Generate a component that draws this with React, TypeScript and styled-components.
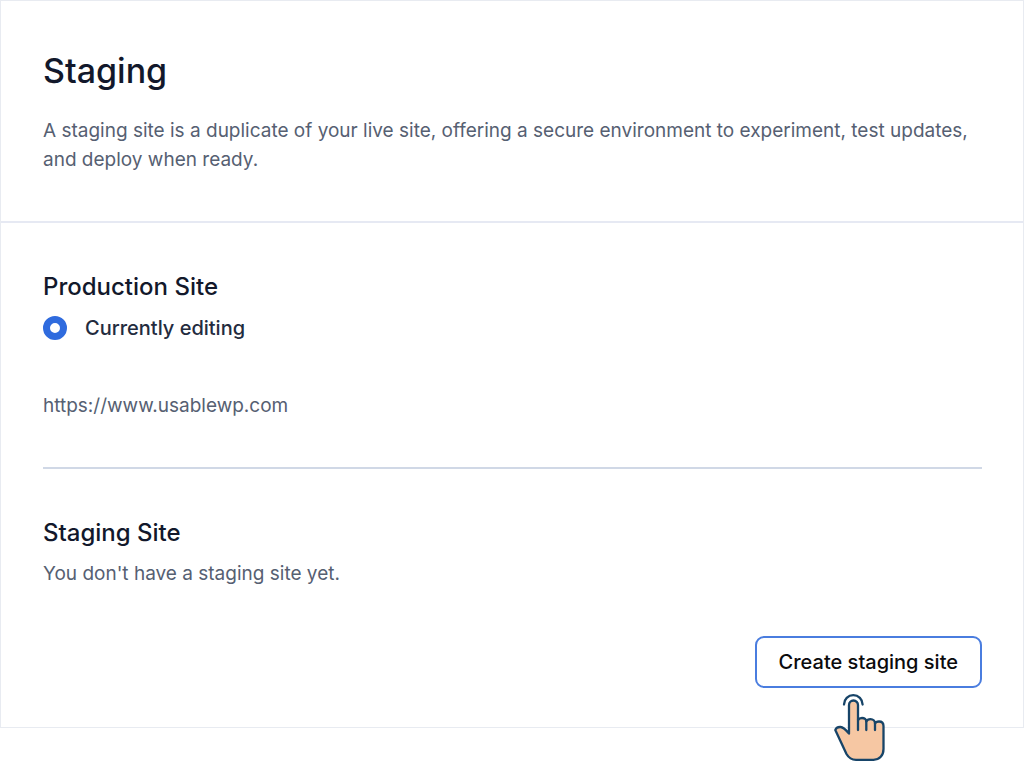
import React from "react";
import styled, { createGlobalStyle } from "styled-components";

const GlobalStyle = createGlobalStyle`
  *, *::before, *::after { box-sizing: border-box; }
  body {
    margin: 0;
    background: #ffffff;
    color: #566072;
    font-family: Inter, "Liberation Sans", sans-serif;
    font-size: 19px;
    line-height: 29px;
  }
`;

const Page = styled.div`
  min-height: 100vh;
`;

const Panel = styled.main`
  border: 1px solid #e8ebf1;
`;

const Header = styled.header`
  padding: 46px 42px 47px;
  border-bottom: 2px solid #e6e9f3;
`;

const Title = styled.h1`
  margin: 0 0 21px;
  color: #12182b;
  font-size: 34px;
  line-height: 48px;
  font-weight: 500;
`;

const Text = styled.p`
  margin: 0;
`;

const Body = styled.div`
  padding: 48px 41px 39px 42px;
`;

const Site = styled.section`
  & + & {
    margin-top: 47px;
    padding-top: 48px;
    border-top: 2px solid #d0d8e6;
  }
`;

const SiteName = styled.h2`
  margin: 0 0 10px;
  color: #12182b;
  font-size: 24px;
  line-height: 32px;
  font-weight: 500;
`;

const Choice = styled.label`
  display: flex;
  align-items: center;
  gap: 18px;
  margin-bottom: 48px;
  color: #232b3e;
  font-size: 20px;
  line-height: 30px;
  font-weight: 500;
`;

const Radio = styled.input`
  appearance: none;
  width: 24px;
  height: 24px;
  margin: 0;
  border: 7px solid #2f6bde;
  border-radius: 50%;
  background: #ffffff;
`;

const Actions = styled.div`
  display: flex;
  justify-content: flex-end;
  margin-top: 48px;
`;

const ButtonWrap = styled.div`
  position: relative;
`;

const Button = styled.button`
  display: block;
  padding: 9px 22px;
  border: 2px solid #4a7ddf;
  border-radius: 9px;
  background: #ffffff;
  color: #0b0b0d;
  font: inherit;
  font-size: 20px;
  line-height: 30px;
  font-weight: 500;
`;

const Pointer = styled.svg`
  position: absolute;
  top: 57px;
  right: 96px;
  pointer-events: none;
`;

export default function App() {
  return (
    <Page>
      <GlobalStyle />
      <Panel>
        <Header>
          <Title>Staging</Title>
          <Text>
            A staging site is a duplicate of your live site, offering a secure environment to
            experiment, test updates, and deploy when ready.
          </Text>
        </Header>
        <Body>
          <Site>
            <SiteName>Production Site</SiteName>
            <Choice>
              <Radio type="radio" name="site" defaultChecked />
              Currently editing
            </Choice>
            <Text>https://www.usablewp.com</Text>
          </Site>
          <Site>
            <SiteName>Staging Site</SiteName>
            <Text>You don't have a staging site yet.</Text>
            <Actions>
              <ButtonWrap>
                <Button type="button">Create staging site</Button>
                <Pointer
                  width="53"
                  height="68"
                  viewBox="0 0 53 68"
                  fill="none"
                  stroke="#174468"
                  strokeWidth="2.3"
                  strokeLinecap="round"
                  strokeLinejoin="round"
                  aria-hidden="true"
                >
                  <path
                    d="M16 40.500V12a4.500 4.500 0 0 1 9 0V27C26 25.500 27.500 25 29 25C31.500 25 33.300 26.500 33.300 28.500C34 27 35.500 26.200 37.500 26.200C40 26.200 42 28 42 30.500C42.500 29.300 44 28.500 46 28.500C49 28.500 50.500 30.500 50.500 33V56C50.500 62.500 46.500 66.800 40.500 66.800H23C18.500 66.800 15.500 64.500 13.500 61L2.300 37C3 34.800 5.500 33.900 7.500 34C11 34.200 13.500 37.500 16 40.500Z"
                    fill="#f6c7a3"
                  />
                  <path d="M25 27v10M33.300 28.500V37M42 30.500V37" />
                  <path d="M11 11.500a9.300 9.300 0 0 1 18.600 0" />
                </Pointer>
              </ButtonWrap>
            </Actions>
          </Site>
        </Body>
      </Panel>
    </Page>
  );
}
